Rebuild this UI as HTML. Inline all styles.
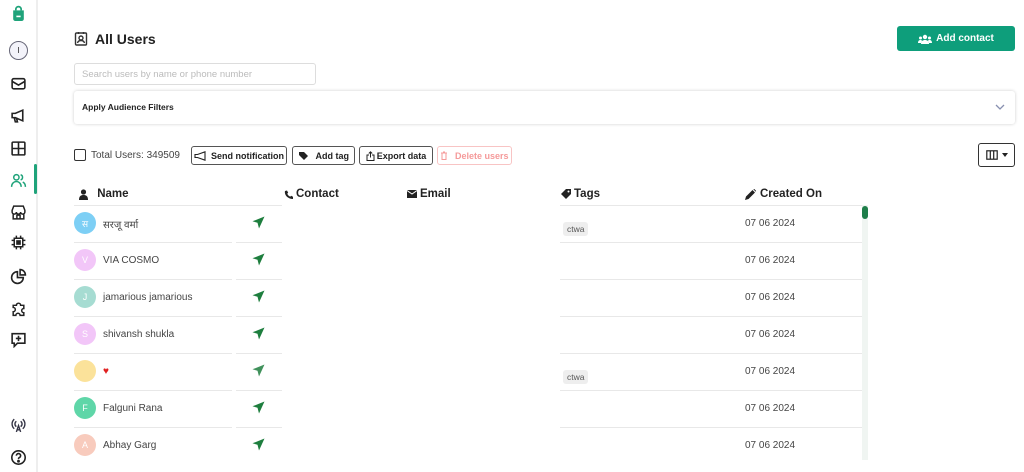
<!DOCTYPE html>
<html><head><meta charset="utf-8"><style>
*{box-sizing:border-box;margin:0;padding:0}
body{width:1024px;height:472px;overflow:hidden;background:#fff;font-family:"Liberation Sans","Noto Sans CJK SC",sans-serif;position:relative;color:#222}
.a{position:absolute}
.side{left:0;top:0;width:38px;height:472px;border-right:2px solid #eee;background:#fff}
.ic{position:absolute;left:10px;width:17px;height:17px}
.btn{position:absolute;top:146px;height:19px;border:1px solid #555;border-radius:3px;font-size:9px;font-weight:bold;display:flex;align-items:center;justify-content:center;gap:4px;color:#222}
.hd{position:absolute;top:188px;font-size:11.5px;font-weight:bold;display:flex;align-items:center;gap:5px}
.av{position:absolute;left:74px;width:22px;height:22px;border-radius:50%;color:#fff;font-size:9px;display:flex;align-items:center;justify-content:center}
.nm{position:absolute;left:103px;font-size:10px;color:#444}
.ln{position:absolute;height:1px;background:#e8e8e8}
.dt{position:absolute;left:745px;font-size:10px;color:#444}
.tag{position:absolute;left:563px;font-size:8.5px;color:#555;background:#eee;border-radius:3px;padding:2px 4px}
.snd{position:absolute;left:252px;width:13px;height:13px}
</style></head><body>
<div class="a side">
<svg class="ic" style="top:5px" viewBox="0 0 16 16"><path d="M3 5h10v8a2 2 0 0 1-2 2H5a2 2 0 0 1-2-2z" fill="#1fa37a"/><path d="M5.5 5V4a2.5 2.5 0 0 1 5 0v1" fill="none" stroke="#1fa37a" stroke-width="1.6"/><rect x="6" y="10" width="4" height="1.5" fill="#fff"/></svg>
<div class="a" style="left:9px;top:41px;width:19px;height:19px;border:1px solid #667;border-radius:50%;font-size:8px;display:flex;align-items:center;justify-content:center;background:#f3f3fa">I</div>
<svg class="ic" style="top:75px" viewBox="0 0 16 16" fill="none" stroke="#222" stroke-width="1.5"><rect x="2" y="3.5" width="12" height="9.5" rx="1.5"/><path d="M2 6l6 3.5 6-3.5"/></svg>
<svg class="ic" style="top:107px" viewBox="0 0 16 16" fill="none" stroke="#222" stroke-width="1.5"><path d="M2 6h3l7-3v10l-7-3H2zM4 10l1 4h2l-1-4"/></svg>
<svg class="ic" style="top:140px" viewBox="0 0 16 16" fill="none" stroke="#222" stroke-width="1.5"><rect x="2" y="2" width="12" height="12" rx="1"/><path d="M8 2v12M2 8h12"/></svg>
<svg class="ic" style="top:172px" viewBox="0 0 16 16" fill="none" stroke="#1fa37a" stroke-width="1.4"><circle cx="6" cy="5" r="2.5"/><path d="M1.5 14c0-3 2-5 4.5-5s4.5 2 4.5 5"/><path d="M10 2.6a2.5 2.5 0 0 1 0 4.8M12 9.5c1.5.7 2.5 2.3 2.5 4.5"/></svg>
<div class="a" style="left:34px;top:164px;width:3px;height:30px;background:#1fa37a;border-radius:2px"></div>
<svg class="ic" style="top:204px" viewBox="0 0 16 16" fill="none" stroke="#222" stroke-width="1.4"><path d="M2 6l1.5-4h9L14 6v1.5a2 2 0 0 1-4 0 2 2 0 0 1-4 0 2 2 0 0 1-4 0z M3 9v5h10V9M6.5 14v-3.5h3V14"/></svg>
<svg class="ic" style="top:234px" viewBox="0 0 16 16" fill="none" stroke="#222" stroke-width="1.4"><rect x="4" y="4" width="8" height="8"/><path d="M6 1.5v2.5M10 1.5v2.5M6 12v2.5M10 12v2.5M1.5 6H4M1.5 10H4M12 6h2.5M12 10h2.5"/><rect x="6.5" y="6.5" width="3" height="3" fill="#222"/></svg>
<svg class="ic" style="top:268px" viewBox="0 0 16 16" fill="none" stroke="#222" stroke-width="1.5"><path d="M7 3.5A5.5 5.5 0 1 0 12.5 9H7z"/><path d="M9.5 1.5a5 5 0 0 1 5 5h-5z"/></svg>
<svg class="ic" style="top:300px" viewBox="0 0 16 16" fill="none" stroke="#222" stroke-width="1.4"><path d="M3 5h3a2 2 0 1 1 4 0h3v3a2 2 0 1 0 0 4v2.5H9.5a2 2 0 1 0-4 0H3V11a2 2 0 1 0 0-4z"/></svg>
<svg class="ic" style="top:331px" viewBox="0 0 16 16" fill="none" stroke="#222" stroke-width="1.5"><path d="M2 2.5h12v9H7l-3 3v-3H2z"/><path d="M8 4.5v5M5.5 7h5"/></svg>
<svg class="ic" style="top:416px" viewBox="0 0 16 16" fill="none" stroke="#334" stroke-width="1.3"><path d="M4 3a6 6 0 0 0 0 9M12 3a6 6 0 0 1 0 9M6 5a3 3 0 0 0 0 5M10 5a3 3 0 0 1 0 5"/><path d="M6 15l2-6 2 6M6.7 13h2.6"/></svg>
<svg class="ic" style="top:449px" viewBox="0 0 16 16" fill="none" stroke="#222" stroke-width="1.5"><circle cx="8" cy="8" r="6.3"/><path d="M6 6.3a2 2 0 1 1 2.5 1.9c-.5.2-.5.6-.5 1.3"/><circle cx="8" cy="11.5" r=".6" fill="#222"/></svg>
</div>

<svg class="a" style="left:74px;top:31px;width:14px;height:15px" viewBox="0 0 14 15" fill="none" stroke="#333" stroke-width="1.4"><rect x="1.5" y="2" width="11" height="12" rx="1"/><path d="M4.5 1v2M9.5 1v2"/><circle cx="7" cy="7" r="2"/><path d="M3.5 12c.5-2 2-2.5 3.5-2.5s3 .5 3.5 2.5"/></svg>
<div class="a" style="left:95px;top:31px;font-size:14px;font-weight:bold">All Users</div>
<div class="a" style="left:897px;top:26px;width:118px;height:25px;background:#0e9e7b;border-radius:3px;color:#fff;font-size:10px;font-weight:bold;display:flex;align-items:center;justify-content:center;gap:4px"><svg width="14" height="10" viewBox="0 0 14 10" fill="#fff"><circle cx="7" cy="3" r="2.2"/><circle cx="2.5" cy="4" r="1.5"/><circle cx="11.5" cy="4" r="1.5"/><path d="M3 10c0-3 2-4 4-4s4 1 4 4z"/><path d="M0 9c0-2 1-3 2.5-3S4 7 4 7L3 9zM14 9c0-2-1-3-2.5-3S10 7 10 7l1 2z"/></svg>Add contact</div>
<div class="a" style="left:74px;top:63px;width:242px;height:22px;border:1px solid #ddd;border-radius:3px;font-size:9.5px;color:#bbb;padding:5px 7px">Search users by name or phone number</div>
<div class="a" style="left:74px;top:91px;width:941px;height:33px;border-radius:3px;box-shadow:0 0 3px rgba(0,0,0,.2);font-size:8.5px;font-weight:bold;padding:11px 8px">Apply Audience Filters</div>
<svg class="a" style="left:994px;top:103px" width="12" height="8" viewBox="0 0 12 8" fill="none" stroke="#8890b0" stroke-width="1.3"><path d="M2 2l4 4 4-4"/></svg>

<div class="a" style="left:74px;top:149px;width:12px;height:12px;border:1.5px solid #333;border-radius:2px"></div>
<div class="a" style="left:91px;top:150px;font-size:10px;color:#444">Total Users: 349509</div>
<div class="btn" style="left:191px;width:96px"><svg width="13" height="10" viewBox="0 0 13 10" fill="none" stroke="#222" stroke-width="1.1"><path d="M1 3.5h2.5L11 .8v8.4L3.5 6.5H1z"/></svg>Send notification</div>
<div class="btn" style="left:292px;width:63px"><svg width="11" height="10" viewBox="0 0 11 10" fill="#222"><path d="M1 1h5l4 4-4 4-5-5z"/></svg>&nbsp;Add tag</div>
<div class="btn" style="left:359px;width:74px;gap:2px"><svg width="9" height="10" viewBox="0 0 9 10" fill="none" stroke="#222" stroke-width="1"><path d="M3 4H1v5.5h7V4H6M4.5 6.5V.8M2.8 2.5l1.7-1.7 1.7 1.7"/></svg>Export data</div>
<div class="btn" style="left:437px;width:75px;border-color:#f8c4c4;color:#f59a9a"><svg width="8" height="9" viewBox="0 0 8 9" fill="none" stroke="#f59a9a" stroke-width="1"><path d="M1 2h6M2 2v6.5h4V2M3 1h2"/></svg>&nbsp;Delete users</div>
<div class="a" style="left:978px;top:143px;width:37px;height:24px;border:1px solid #333;border-radius:3px;display:flex;align-items:center;justify-content:center;gap:4px"><svg width="12" height="10" viewBox="0 0 12 10" fill="none" stroke="#222" stroke-width="1.2"><rect x=".8" y=".8" width="10.4" height="8.4"/><path d="M4.3 1v8M7.7 1v8"/></svg><svg width="6" height="4" viewBox="0 0 6 4"><path d="M0 0h6L3 4z" fill="#222"/></svg></div>

<div class="hd" style="left:78px"><svg width="11" height="11" viewBox="0 0 11 11" fill="#222"><circle cx="5.5" cy="3" r="2.6"/><path d="M1 11c0-4 2-5 4.5-5s4.5 1 4.5 5z"/></svg>&nbsp;Name</div>
<div class="hd" style="left:284px;gap:3px"><svg width="9" height="9" viewBox="0 0 9 9" fill="#222"><path d="M1 1l2-.5 1.2 2.3-1 .9a6 6 0 0 0 3 3l.9-1L9.4 7 9 9C4 9 0 5 1 1z"/></svg>Contact</div>
<div class="hd" style="left:407px;gap:3px"><svg width="10" height="8" viewBox="0 0 10 8" fill="#222"><rect width="10" height="8"/><path d="M0 .5l5 3.5 5-3.5" stroke="#fff" fill="none"/></svg>Email</div>
<div class="hd" style="left:561px;gap:3px"><svg width="10" height="10" viewBox="0 0 10 10" fill="#222"><path d="M5 0h5v5L5 10 0 5z"/><circle cx="7.5" cy="2.5" r="1" fill="#fff"/></svg>Tags</div>
<div class="hd" style="left:745px;gap:4px"><svg width="11" height="11" viewBox="0 0 11 11" fill="#222"><path d="M0 11l1-3.5L7.5 1 10 3.5 3.5 10zM8.3.3l1-.3 1.7 1.7-.3 1z"/></svg>Created On</div>
<div class="ln" style="left:74px;top:205px;width:208px"></div>
<div class="ln" style="left:560px;top:205px;width:302px"></div>

<div class="a" style="left:862px;top:205px;width:6px;height:255px;background:#f0f5f2"></div>
<div class="a" style="left:862px;top:206px;width:6px;height:13px;background:#1e7e4a;border-radius:3px"></div>

<div class="av" style="top:212px;background:#7dcff5">स</div><div class="nm" style="top:217px">सरजू वर्मा</div>
<div class="av" style="top:249px;background:#f2c6f8">V</div><div class="nm" style="top:255px">VIA COSMO</div>
<div class="av" style="top:286px;background:#a6dcd2">J</div><div class="nm" style="top:292px">jamarious jamarious</div>
<div class="av" style="top:323px;background:#f2c6f8">S</div><div class="nm" style="top:329px">shivansh shukla</div>
<div class="av" style="top:360px;background:#fbe29a"></div><div class="nm" style="top:366px;color:#e02020">♥</div>
<div class="av" style="top:397px;background:#5fd6a8">F</div><div class="nm" style="top:403px">Falguni Rana</div>
<div class="av" style="top:434px;background:#f8cbbd">A</div><div class="nm" style="top:440px">Abhay Garg</div>

<svg class="snd" style="top:216px" viewBox="0 0 13 13"><path d="M12.5.5L.5 5.3l5 1.5 1.5 5.7z" fill="#1e7e3e"/></svg>
<svg class="snd" style="top:253px" viewBox="0 0 13 13"><path d="M12.5.5L.5 5.3l5 1.5 1.5 5.7z" fill="#1e7e3e"/></svg>
<svg class="snd" style="top:290px" viewBox="0 0 13 13"><path d="M12.5.5L.5 5.3l5 1.5 1.5 5.7z" fill="#1e7e3e"/></svg>
<svg class="snd" style="top:327px" viewBox="0 0 13 13"><path d="M12.5.5L.5 5.3l5 1.5 1.5 5.7z" fill="#1e7e3e"/></svg>
<svg class="snd" style="top:364px" viewBox="0 0 13 13"><path d="M12.5.5L.5 5.3l5 1.5 1.5 5.7z" fill="#1e7e3e" opacity=".85"/></svg>
<svg class="snd" style="top:401px" viewBox="0 0 13 13"><path d="M12.5.5L.5 5.3l5 1.5 1.5 5.7z" fill="#1e7e3e"/></svg>
<svg class="snd" style="top:438px" viewBox="0 0 13 13"><path d="M12.5.5L.5 5.3l5 1.5 1.5 5.7z" fill="#1e7e3e"/></svg>

<div class="tag" style="top:222px">ctwa</div>
<div class="tag" style="top:370px">ctwa</div>
<div class="dt" style="top:255px">07 06 2024</div>
<div class="dt" style="top:218px">07 06 2024</div>
<div class="dt" style="top:292px">07 06 2024</div>
<div class="dt" style="top:329px">07 06 2024</div>
<div class="dt" style="top:366px">07 06 2024</div>
<div class="dt" style="top:403px">07 06 2024</div>
<div class="dt" style="top:440px">07 06 2024</div>

<div class="ln" style="left:74px;top:242px;width:158px"></div><div class="ln" style="left:236px;top:242px;width:46px"></div><div class="ln" style="left:560px;top:242px;width:302px"></div>
<div class="ln" style="left:74px;top:279px;width:158px"></div><div class="ln" style="left:236px;top:279px;width:46px"></div><div class="ln" style="left:560px;top:279px;width:302px"></div>
<div class="ln" style="left:74px;top:316px;width:158px"></div><div class="ln" style="left:236px;top:316px;width:46px"></div><div class="ln" style="left:560px;top:316px;width:302px"></div>
<div class="ln" style="left:74px;top:353px;width:158px"></div><div class="ln" style="left:236px;top:353px;width:46px"></div><div class="ln" style="left:560px;top:353px;width:302px"></div>
<div class="ln" style="left:74px;top:390px;width:158px"></div><div class="ln" style="left:236px;top:390px;width:46px"></div><div class="ln" style="left:560px;top:390px;width:302px"></div>
<div class="ln" style="left:74px;top:427px;width:158px"></div><div class="ln" style="left:236px;top:427px;width:46px"></div><div class="ln" style="left:560px;top:427px;width:302px"></div>
</body></html>
